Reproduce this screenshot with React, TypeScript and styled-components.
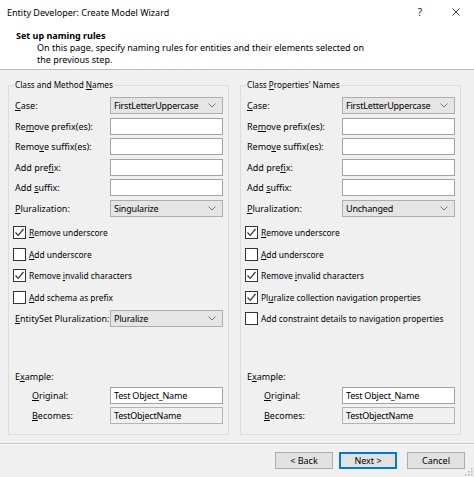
import React from "react";
import styled, { createGlobalStyle } from "styled-components";

const GlobalStyle = createGlobalStyle`
  html, body {
    margin: 0;
    padding: 0;
    background: #f0f0f0;
  }
  body {
    font-family: "Noto Sans", "DejaVu Sans", sans-serif;
    font-size: 9px;
    color: #000;
  }
`;

const Window = styled.div`
  position: relative;
  width: 474px;
  height: 477px;
  display: flex;
  flex-direction: column;
  background: #f0f0f0;
  overflow: hidden;
`;

const TitleBar = styled.div`
  height: 26px;
  display: flex;
  align-items: center;
  padding-left: 7px;
  background: #fff;
  font-size: 9px;
`;

const TitleText = styled.span`
  flex: 1;
  margin-top: -1px;
`;

const TitleButton = styled.span`
  width: 36px;
  display: flex;
  justify-content: center;
  align-items: center;
  margin-top: -2px;
  font-size: 10px;
  color: #222;
`;

const Header = styled.header`
  background: #fff;
  padding: 4px 0 3px 16px;
  border-bottom: 1px solid #b9b9b9;
  line-height: 12px;
`;

const Heading = styled.h1`
  margin: 0;
  font-size: 9px;
  font-weight: bold;
`;

const Description = styled.p`
  margin: 0;
  padding-left: 21px;
  width: 340px;
`;

const Body = styled.main`
  flex: 1;
  display: grid;
  grid-template-columns: 221px 221px;
  column-gap: 11px;
  padding: 9px 0 0 8px;
  min-height: 0;
`;

const Group = styled.fieldset`
  margin: 0;
  padding: 0 5px 10px 6px;
  min-width: 0;
  border: 1px solid #dcdcdc;
  display: flex;
  flex-direction: column;
`;

const Legend = styled.legend`
  padding: 0 1px;
  margin-left: -1px;
  line-height: 12px;
  font-size: 8.2px;
`;

const FormGrid = styled.div<{ $top?: number }>`
  display: grid;
  grid-template-columns: 95px 1fr;
  grid-auto-rows: 17px;
  row-gap: 3.5px;
  align-items: center;
  margin-top: ${(p) => p.$top ?? 0}px;
`;

const Label = styled.span<{ $indent?: number }>`
  white-space: nowrap;
  padding-left: ${(p) => p.$indent ?? 0}px;
`;

const Key = styled.span`
  text-decoration: underline;
  text-underline-offset: 1px;
`;

const ComboBox = styled.div`
  height: 17px;
  box-sizing: border-box;
  border: 1px solid #adadad;
  background: #e5e5e5;
  display: flex;
  align-items: center;
  padding: 0 6px 0 3px;
  letter-spacing: -0.2px;
`;

const ComboText = styled.span`
  flex: 1;
`;

const TextBox = styled.div<{ $readOnly?: boolean }>`
  height: 17px;
  box-sizing: border-box;
  border: 1px solid ${(p) => (p.$readOnly ? "#b4b4b4" : "#a2a2a2")};
  background: ${(p) => (p.$readOnly ? "#f0f0f0" : "#fff")};
  display: flex;
  align-items: center;
  padding: 0 3px;
  letter-spacing: -0.2px;
`;

const CheckList = styled.div`
  display: flex;
  flex-direction: column;
  gap: 8.6px;
  margin-top: 9.5px;
`;

const CheckRow = styled.div`
  display: flex;
  align-items: center;
  height: 13px;
  gap: 3px;
  margin-left: -2px;
  white-space: nowrap;
  font-size: 8.4px;
`;

const Box = styled.span`
  width: 13px;
  height: 13px;
  box-sizing: border-box;
  border: 1px solid #333;
  background: #fff;
  display: flex;
  align-items: center;
  justify-content: center;
  flex: none;
`;

const Spacer = styled.div`
  flex: 1;
`;

const ExampleLabel = styled.div`
  line-height: 12px;
  margin-bottom: 4px;
`;

const Footer = styled.footer`
  margin-top: 8px;
  border-top: 1px solid #c8c8c8;
  box-shadow: inset 0 1px 0 #fff;
  height: 34px;
  display: flex;
  justify-content: flex-end;
  align-items: flex-start;
  padding: 8px 9px 0 0;
  box-sizing: border-box;
`;

const Button = styled.button<{ $primary?: boolean; $gap?: number }>`
  width: 58px;
  height: 17px;
  margin-left: ${(p) => p.$gap ?? 0}px;
  padding: 0;
  font-family: inherit;
  font-size: 9px;
  color: #000;
  background: #e1e1e1;
  border: 1px solid ${(p) => (p.$primary ? "#0078d7" : "#adadad")};
  box-shadow: ${(p) => (p.$primary ? "inset 0 0 0 1px #0078d7" : "none")};
`;

const Grip = styled.svg`
  position: absolute;
  right: 1px;
  bottom: 1px;
`;

const Chevron = () => (
  <svg width="8" height="5" viewBox="0 0 8 5">
    <polyline points="0.5,0.5 4,4 7.5,0.5" fill="none" stroke="#777" strokeWidth="1" />
  </svg>
);

const Check = () => (
  <svg width="11" height="11" viewBox="0 0 11 11">
    <polyline points="1.5,5.5 4.2,8.3 9.5,2" fill="none" stroke="#333" strokeWidth="1.2" />
  </svg>
);

const Combo = ({ value }: { value: string }) => (
  <ComboBox>
    <ComboText>{value}</ComboText>
    <Chevron />
  </ComboBox>
);

type CheckItem = { label: React.ReactNode; checked: boolean };

const Checks = ({ items }: { items: CheckItem[] }) => (
  <CheckList>
    {items.map((item, i) => (
      <CheckRow key={i}>
        <Box>{item.checked && <Check />}</Box>
        <span>{item.label}</span>
      </CheckRow>
    ))}
  </CheckList>
);

const NameFields = ({ pluralization }: { pluralization: string }) => (
  <FormGrid $top={6}>
    <Label>
      <Key>C</Key>ase:
    </Label>
    <Combo value="FirstLetterUppercase" />
    <Label>
      Re<Key>m</Key>ove prefix(es):
    </Label>
    <TextBox />
    <Label>
      Remo<Key>v</Key>e suffix(es):
    </Label>
    <TextBox />
    <Label>
      Add pre<Key>f</Key>ix:
    </Label>
    <TextBox />
    <Label>
      Add <Key>s</Key>uffix:
    </Label>
    <TextBox />
    <Label>
      <Key>P</Key>luralization:
    </Label>
    <Combo value={pluralization} />
  </FormGrid>
);

const Example = () => (
  <>
    <ExampleLabel>
      E<Key>x</Key>ample:
    </ExampleLabel>
    <FormGrid>
      <Label $indent={17}>
        <Key>O</Key>riginal:
      </Label>
      <TextBox>Test Object_Name</TextBox>
      <Label $indent={17}>
        <Key>B</Key>ecomes:
      </Label>
      <TextBox $readOnly>TestObjectName</TextBox>
    </FormGrid>
  </>
);

const App = () => {
  const leftChecks: CheckItem[] = [
    { label: <><Key>R</Key>emove underscore</>, checked: true },
    { label: <><Key>A</Key>dd underscore</>, checked: false },
    { label: <>Remove <Key>i</Key>nvalid characters</>, checked: true },
    { label: <><Key>A</Key>dd schema as prefix</>, checked: false },
  ];
  const rightChecks: CheckItem[] = [
    { label: <><Key>R</Key>emove underscore</>, checked: true },
    { label: <><Key>A</Key>dd underscore</>, checked: false },
    { label: <>Remove <Key>i</Key>nvalid characters</>, checked: true },
    { label: <>Pl<Key>u</Key>ralize collection navigation properties</>, checked: true },
    { label: <>Add constraint details to navigation properties</>, checked: false },
  ];

  return (
    <>
      <GlobalStyle />
      <Window>
        <TitleBar>
          <TitleText>Entity Developer: Create Model Wizard</TitleText>
          <TitleButton>?</TitleButton>
          <TitleButton>
            <svg width="8" height="8" viewBox="0 0 8 8">
              <path d="M0.5 0.5 L7.5 7.5 M7.5 0.5 L0.5 7.5" stroke="#222" strokeWidth="0.9" />
            </svg>
          </TitleButton>
        </TitleBar>
        <Header>
          <Heading>Set up naming rules</Heading>
          <Description>
            On this page, specify naming rules for entities and their elements selected on the
            previous step.
          </Description>
        </Header>
        <Body>
          <Group>
            <Legend>
              Class and Method <Key>N</Key>ames
            </Legend>
            <NameFields pluralization="Singularize" />
            <Checks items={leftChecks} />
            <FormGrid $top={6}>
              <Label>
                <Key>E</Key>ntitySet Pluralization:
              </Label>
              <Combo value="Pluralize" />
            </FormGrid>
            <Spacer />
            <Example />
          </Group>
          <Group>
            <Legend>
              Class <Key>P</Key>roperties' Names
            </Legend>
            <NameFields pluralization="Unchanged" />
            <Checks items={rightChecks} />
            <Spacer />
            <Example />
          </Group>
        </Body>
        <Footer>
          <Button>&lt; Back</Button>
          <Button $primary $gap={6}>
            Next &gt;
          </Button>
          <Button $gap={10}>Cancel</Button>
        </Footer>
        <Grip width="8" height="8" viewBox="0 0 8 8">
          {[
            [6, 0],
            [6, 3],
            [3, 3],
            [6, 6],
            [3, 6],
            [0, 6],
          ].map(([x, y], i) => (
            <rect key={i} x={x} y={y} width="1.5" height="1.5" fill="#b0b0b0" />
          ))}
        </Grip>
      </Window>
    </>
  );
};

export default App;
